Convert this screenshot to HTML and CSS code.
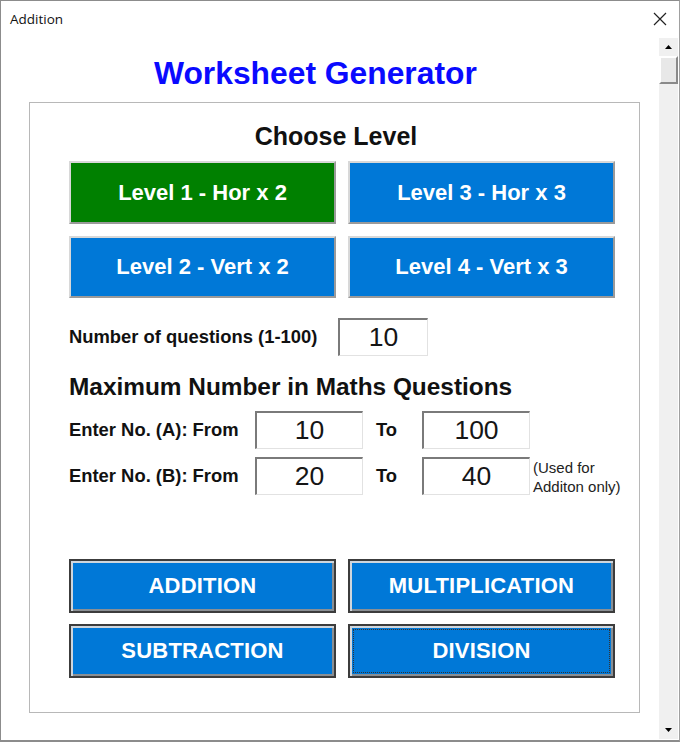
FILE: index.html
```html
<!DOCTYPE html>
<html>
<head>
<meta charset="utf-8">
<link rel="stylesheet" href="styles.css">
</head>
<body>
<div class="window">
  <div class="titlebar">
    <span class="wtitle">Addition</span>
    <svg class="close" width="14" height="14" viewBox="0 0 14 14"><path d="M1 1L13 13M13 1L1 13" stroke="#222" stroke-width="1.2" fill="none"/></svg>
  </div>
  <div class="main">
    <div class="content">
      <h1 class="apptitle">Worksheet Generator</h1>
      <div class="frame">
        <h2 class="choose">Choose Level</h2>
        <div class="levels">
          <div class="lvl active">Level 1 - Hor x 2</div>
          <div class="lvl">Level 3 - Hor x 3</div>
          <div class="lvl">Level 2 - Vert x 2</div>
          <div class="lvl">Level 4 - Vert x 3</div>
        </div>
        <div class="row numrow">
          <span class="label numlabel">Number of questions (1-100)</span>
          <div class="input w90">10</div>
        </div>
        <h2 class="maxhead">Maximum Number in Maths Questions</h2>
        <div class="row rowa">
          <span class="label rlabel">Enter No. (A): From</span>
          <div class="input w108">10</div>
          <span class="label to">To</span>
          <div class="input w108">100</div>
        </div>
        <div class="row rowb">
          <span class="label rlabel">Enter No. (B): From</span>
          <div class="input w108">20</div>
          <span class="label to">To</span>
          <div class="input w108">40</div>
          <span class="note">(Used for<br>Additon only)</span>
        </div>
        <div class="ops">
          <div class="op">ADDITION</div>
          <div class="op">MULTIPLICATION</div>
          <div class="op">SUBTRACTION</div>
          <div class="op focus">DIVISION</div>
        </div>
      </div>
    </div>
    <div class="scrollbar">
      <div class="sbtn"><svg width="7" height="4" viewBox="0 0 7 4"><path d="M0 4L3.5 0L7 4Z" fill="#000"/></svg></div>
      <div class="thumb"></div>
      <div class="track"></div>
      <div class="sbtn"><svg width="7" height="4" viewBox="0 0 7 4"><path d="M0 0L3.5 4L7 0Z" fill="#000"/></svg></div>
    </div>
  </div>
</div>
</body>
</html>
```
FILE: styles.css
```css
html, body {
  margin: 0;
  padding: 0;
  background: #ffffff;
}
body {
  font-family: "Liberation Sans", Arial, sans-serif;
}
.window {
  width: 680px;
  height: 742px;
  box-sizing: border-box;
  border-top: 1px solid #8c8c8c;
  border-left: 1px solid #8c8c8c;
  border-bottom: 2px solid #8c8c8c;
  border-right: 1px solid #a0a0a0;
  display: flex;
  flex-direction: column;
  background: #fff;
}
.titlebar {
  height: 37px;
  display: flex;
  align-items: center;
  justify-content: space-between;
  padding: 0 12px 0 9px;
  flex: none;
}
.wtitle {
  font-family: "Open Sans", "Liberation Sans", sans-serif;
  font-size: 13.5px;
  color: #111;
  margin-top: -1px;
}
.close {
  margin-top: -1px;
}
.main {
  flex: 1;
  display: flex;
  min-height: 0;
}
.content {
  flex: 1;
  padding-left: 28px;
}
.apptitle {
  margin: 17px 0 0 0;
  padding-left: 125px;
  font-size: 31.8px;
  line-height: 36px;
  font-weight: bold;
  color: #0a0aff;
}
.frame {
  margin-top: 11px;
  width: 611px;
  height: 611px;
  box-sizing: border-box;
  border: 1px solid #b8b8b8;
  padding: 20px 0 0 39px;
}
.choose {
  margin: 0;
  padding-right: 36px;
  text-align: center;
  font-size: 25px;
  line-height: 26px;
  font-weight: bold;
  color: #111;
}
.levels {
  margin-top: 12px;
  display: grid;
  grid-template-columns: 267px 267px;
  grid-template-rows: 63px 62px;
  column-gap: 12px;
  row-gap: 12px;
}
.lvl {
  box-sizing: border-box;
  background: #0078d7;
  color: #fff;
  font-size: 22px;
  font-weight: bold;
  display: flex;
  align-items: center;
  justify-content: center;
  border-style: solid;
  border-width: 2px;
  border-color: #d8d8d8 #9a9a9a #9a9a9a #d8d8d8;
}
.lvl.active {
  background: #008000;
}
.row {
  display: flex;
  align-items: center;
  height: 38px;
}
.label {
  font-size: 18.4px;
  font-weight: bold;
  color: #111;
}
.numrow {
  margin-top: 20px;
}
.numlabel {
  width: 269px;
}
.rlabel {
  width: 186px;
}
.to {
  width: 46px;
  padding-left: 13px;
}
.input {
  box-sizing: border-box;
  height: 38px;
  border-style: solid;
  border-width: 2px 1px 1px 2px;
  border-color: #7a7a7a #e2e2e2 #e2e2e2 #7a7a7a;
  font-size: 26.5px;
  color: #151515;
  display: flex;
  align-items: center;
  justify-content: center;
  background: #fff;
}
.w90 {
  width: 90px;
}
.w108 {
  width: 108px;
}
.maxhead {
  margin: 16px 0 0 0;
  font-size: 24.4px;
  line-height: 30px;
  font-weight: bold;
  color: #111;
}
.rowa {
  margin-top: 9px;
}
.rowb {
  margin-top: 8px;
}
.note {
  margin-left: 3px;
  font-size: 15px;
  line-height: 19px;
  color: #222;
  padding-top: 2px;
}
.ops {
  margin-top: 64px;
  display: grid;
  grid-template-columns: 267px 267px;
  grid-template-rows: 54px 54px;
  column-gap: 12px;
  row-gap: 11px;
}
.op {
  box-sizing: border-box;
  background: #0078d7;
  color: #fff;
  font-size: 22px;
  font-weight: bold;
  letter-spacing: 0.2px;
  display: flex;
  align-items: center;
  justify-content: center;
  border: 2px solid #3c3c3c;
  box-shadow: inset 2px 2px 0 #cfd6dd, inset -2px -2px 0 #8a8f94;
}
.op.focus {
  outline: 1px dotted #333;
  outline-offset: -6px;
}
.scrollbar {
  width: 19px;
  flex: none;
  margin-right: 1px;
  margin-bottom: 1px;
  background: #f0f0f0;
  display: flex;
  flex-direction: column;
}
.sbtn {
  height: 18px;
  flex: none;
  display: flex;
  align-items: center;
  justify-content: center;
  background: #f0f0f0;
}
.thumb {
  height: 28px;
  flex: none;
  box-sizing: border-box;
  background: #e8e8e8;
  border-top: 2px solid #fff;
  border-left: 2px solid #fff;
  border-bottom: 2px solid #8a8a8a;
  border-right: 2px solid #8a8a8a;
}
.track {
  flex: 1;
  background: #f0f0f0;
}
```
